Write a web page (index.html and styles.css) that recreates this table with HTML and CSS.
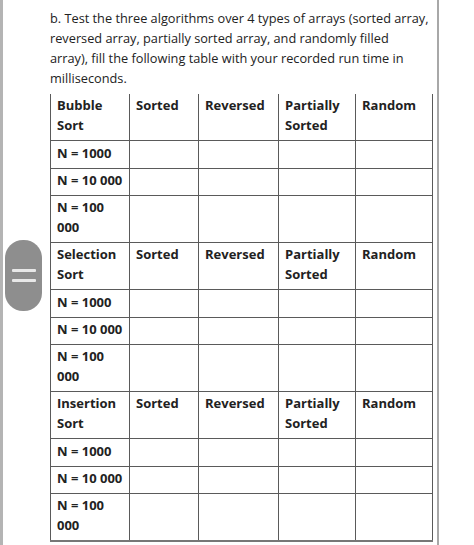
FILE: index.html
```html
<!DOCTYPE html>
<html>
<head>
<meta charset="utf-8">
<link rel="stylesheet" href="styles.css">
</head>
<body>
<div class="frame">
  <div class="edge"></div>
  <div class="handle"><span class="bar"></span><span class="bar"></span></div>
  <div class="page">
    <p class="intro">b. Test the three algorithms over 4 types of arrays (sorted array, reversed array, partially sorted array, and randomly filled<br>array), fill the following table with your recorded run time in milliseconds.</p>
    <table class="grid">
      <colgroup><col class="c1"><col class="c2"><col class="c3"><col class="c4"><col class="c5"></colgroup>
      <tr class="head first"><td>Bubble Sort</td><td>Sorted</td><td>Reversed</td><td>Partially Sorted</td><td>Random</td></tr>
      <tr class="r1"><td>N = 1000</td><td></td><td></td><td></td><td></td></tr>
      <tr class="r2"><td>N = 10 000</td><td></td><td></td><td></td><td></td></tr>
      <tr class="r3"><td>N = 100 000</td><td></td><td></td><td></td><td></td></tr>
      <tr class="head"><td>Selection Sort</td><td>Sorted</td><td>Reversed</td><td>Partially Sorted</td><td>Random</td></tr>
      <tr class="r1"><td>N = 1000</td><td></td><td></td><td></td><td></td></tr>
      <tr class="r2"><td>N = 10 000</td><td></td><td></td><td></td><td></td></tr>
      <tr class="r3"><td>N = 100 000</td><td></td><td></td><td></td><td></td></tr>
      <tr class="head"><td>Insertion Sort</td><td>Sorted</td><td>Reversed</td><td>Partially Sorted</td><td>Random</td></tr>
      <tr class="r1"><td>N = 1000</td><td></td><td></td><td></td><td></td></tr>
      <tr class="r2"><td>N = 10 000</td><td></td><td></td><td></td><td></td></tr>
      <tr class="r3"><td>N = 100 000</td><td></td><td></td><td></td><td></td></tr>
    </table>
  </div>
</div>
</body>
</html>
```
FILE: styles.css
```css
html, body {
  margin: 0;
  padding: 0;
  background: #fff;
}
.frame {
  position: relative;
  width: 474px;
  height: 545px;
  overflow: hidden;
  display: flex;
}
.edge {
  width: 3px;
  background: #b4b4b4;
  flex: none;
}
.handle {
  position: absolute;
  left: 5px;
  top: 240px;
  width: 37px;
  height: 71px;
  border-radius: 18px;
  background: #8e8e8e;
  display: flex;
  flex-direction: column;
  align-items: center;
  justify-content: center;
  gap: 7px;
}
.bar {
  display: block;
  width: 24px;
  height: 3px;
  background: #e8e8e8;
  border-radius: 1px;
}
.page {
  margin-left: 47px;
  width: 387px;
  border-right: 2px solid #a8a8a8;
  padding-top: 8px;
  box-sizing: content-box;
}
.intro {
  margin: 0;
  font-family: "Open Sans", sans-serif;
  font-size: 12.75px;
  line-height: 20px;
  color: #222;
  width: 382px;
}
.grid {
  margin-top: 6px;
  border-collapse: collapse;
  table-layout: fixed;
  width: 383px;
  font-family: "Open Sans", sans-serif;
  font-weight: 700;
  font-size: 13px;
  line-height: 20px;
  color: #222;
}
.c1 { width: 79px; }
.c2 { width: 69px; }
.c3 { width: 80px; }
.c4 { width: 77px; }
.c5 { width: 77px; }
.grid td {
  border: 1px solid #5a5a5a;
  padding: 1px 6px 5px 6px;
  vertical-align: top;
}
.grid tr.first td {
  border-top: none;
}
.grid tr:last-child td {
  border-bottom: 2px solid #777;
}
.grid tr.r1 td { padding-top: 2px; }
```
